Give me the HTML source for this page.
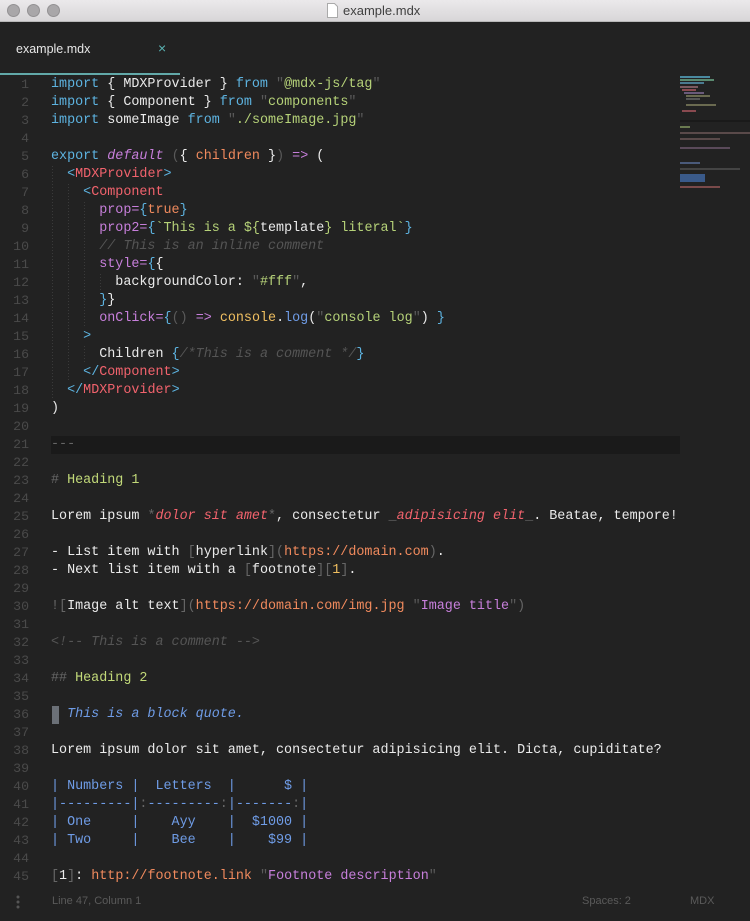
<!DOCTYPE html>
<html><head><meta charset="utf-8">
<style>
*{margin:0;padding:0;box-sizing:border-box}
body{width:750px;height:921px;background:#222;overflow:hidden;position:relative;font-family:"Liberation Mono",monospace}
.title{position:absolute;left:0;top:0;width:750px;height:22px;background:linear-gradient(#ebe9eb,#d8d6d8);border-bottom:1px solid #b8b8b8}
.dot{position:absolute;top:4px;width:13px;height:13px;border-radius:50%;background:#a9a7a9;border:1px solid #939193}
.ttext{position:absolute;top:3px;left:343px;font:13px "Liberation Sans",sans-serif;color:#404040}
.tab{position:absolute;left:16px;top:42px;font:12.5px "Liberation Sans",sans-serif;color:#e6e6e6}
.x{position:absolute;left:158px;top:40px;font:14px "Liberation Sans",sans-serif;color:#5ab3b3}
.uline{position:absolute;left:0;top:73px;width:180px;height:2px;background:#62a9a9}
.hl{position:absolute;left:51px;top:436px;width:629px;height:18px;background:#1a1a1a}
.ln{position:absolute;left:0;width:29px;text-align:right;font-size:13.2px;line-height:18px;color:#4a4a4a}
.c{position:absolute;left:51px;font-size:13.4px;line-height:18px;color:#ebebeb;white-space:pre}
.k{color:#5db3e0}.s{color:#b5d178}.q{color:#5a5a5a}.p{color:#c77fdb}.o{color:#f08a5d}.t{color:#f2636d}.b{color:#5db3e0}
.i{font-style:italic}.cm{color:#555;font-style:italic}.y{color:#f0bf60}.bl{color:#6f9ce6}.g{color:#666}.h{color:#c2d979}
.status{position:absolute;top:895px;font:11px "Liberation Sans",sans-serif;color:#5a5a5a}
.mm{position:absolute;height:2px}
</style></head><body>
<div class="title">
<div class="dot" style="left:7px"></div><div class="dot" style="left:27px"></div><div class="dot" style="left:47px"></div>
<svg style="position:absolute;left:327px;top:3px" width="11" height="15"><path d="M0.5 0.5h7l3 3v11h-10z" fill="#fff" stroke="#aaa"/></svg>
<div class="ttext">example.mdx</div>
</div>
<div class="tab">example.mdx</div><div class="x">×</div>
<div class="uline"></div>
<div class="hl"></div>
<svg style="position:absolute;left:0;top:0" width="750" height="921">
<g stroke="#3a3a3a" stroke-dasharray="1 2">
<line x1="52.5" y1="166" x2="52.5" y2="400"/>
<line x1="68.5" y1="184" x2="68.5" y2="382"/>
<line x1="84.5" y1="202" x2="84.5" y2="328"/>
<line x1="84.5" y1="346" x2="84.5" y2="364"/>
<line x1="100.5" y1="274" x2="100.5" y2="292"/>
</g>
<rect x="52" y="706" width="7" height="18" fill="#6b7077"/>
<circle cx="18" cy="897" r="1.5" fill="#555"/><circle cx="18" cy="902" r="1.5" fill="#555"/><circle cx="18" cy="907" r="1.5" fill="#555"/>
</svg>
<div id="g"></div>
<div class="c" style="top:76px"><span class="k">import</span> { MDXProvider } <span class="k">from</span> <span class="q">"</span><span class="s">@mdx-js/tag</span><span class="q">"</span></div>
<div class="c" style="top:94px"><span class="k">import</span> { Component } <span class="k">from</span> <span class="q">"</span><span class="s">components</span><span class="q">"</span></div>
<div class="c" style="top:112px"><span class="k">import</span> someImage <span class="k">from</span> <span class="q">"</span><span class="s">./someImage.jpg</span><span class="q">"</span></div>
<div class="c" style="top:148px"><span class="k">export</span> <span class="p i">default</span> <span class="q">(</span>{ <span class="o">children</span> }<span class="q">)</span> <span class="p">=&gt;</span> (</div>
<div class="c" style="top:166px">  <span class="b">&lt;</span><span class="t">MDXProvider</span><span class="b">&gt;</span></div>
<div class="c" style="top:184px">    <span class="b">&lt;</span><span class="t">Component</span></div>
<div class="c" style="top:202px">      <span class="p">prop=</span><span class="b">{</span><span class="o">true</span><span class="b">}</span></div>
<div class="c" style="top:220px">      <span class="p">prop2=</span><span class="b">{</span><span class="s">`This is a </span><span class="s">${</span>template<span class="s">}</span><span class="s"> literal`</span><span class="b">}</span></div>
<div class="c" style="top:238px">      <span class="cm">// This is an inline comment</span></div>
<div class="c" style="top:256px">      <span class="p">style=</span><span class="b">{</span>{</div>
<div class="c" style="top:274px">        backgroundColor: <span class="q">"</span><span class="s">#fff</span><span class="q">"</span>,</div>
<div class="c" style="top:292px">      <span class="b">}</span>}</div>
<div class="c" style="top:310px">      <span class="p">onClick=</span><span class="b">{</span><span class="q">()</span> <span class="p">=&gt;</span> <span class="y">console</span>.<span class="bl">log</span>(<span class="q">"</span><span class="s">console log</span><span class="q">"</span>) <span class="b">}</span></div>
<div class="c" style="top:328px">    <span class="b">&gt;</span></div>
<div class="c" style="top:346px">      Children <span class="b">{</span><span class="cm">/*This is a comment */</span><span class="b">}</span></div>
<div class="c" style="top:364px">    <span class="b">&lt;/</span><span class="t">Component</span><span class="b">&gt;</span></div>
<div class="c" style="top:382px">  <span class="b">&lt;/</span><span class="t">MDXProvider</span><span class="b">&gt;</span></div>
<div class="c" style="top:400px">)</div>
<div class="c" style="top:436px"><span class="g">---</span></div>
<div class="c" style="top:472px"><span class="g"># </span><span class="h">Heading 1</span></div>
<div class="c" style="top:508px">Lorem ipsum <span class="g">*</span><span class="t i">dolor sit amet</span><span class="g">*</span>, consectetur <span class="g">_</span><span class="t i">adipisicing elit</span><span class="g">_</span>. Beatae, tempore!</div>
<div class="c" style="top:544px">- List item with <span class="g">[</span>hyperlink<span class="g">](</span><span class="o">https://domain.com</span><span class="g">)</span>.</div>
<div class="c" style="top:562px">- Next list item with a <span class="g">[</span>footnote<span class="g">][</span><span class="y">1</span><span class="g">]</span>.</div>
<div class="c" style="top:598px"><span class="g">![</span>Image alt text<span class="g">](</span><span class="o">https://domain.com/img.jpg</span> <span class="q">"</span><span class="p">Image title</span><span class="q">"</span><span class="g">)</span></div>
<div class="c" style="top:634px"><span class="cm">&lt;!-- This is a comment --&gt;</span></div>
<div class="c" style="top:670px"><span class="g">## </span><span class="h">Heading 2</span></div>
<div class="c" style="top:706px">  <span class="bl i">This is a block quote.</span></div>
<div class="c" style="top:742px">Lorem ipsum dolor sit amet, consectetur adipisicing elit. Dicta, cupiditate?</div>
<div class="c bl" style="top:778px">| Numbers |  Letters  |      $ |</div>
<div class="c bl" style="top:796px">|---------|<span class="g">:</span>---------<span class="g">:</span>|-------<span class="g">:</span>|</div>
<div class="c bl" style="top:814px">| One     |    Ayy    |  $1000 |</div>
<div class="c bl" style="top:832px">| Two     |    Bee    |    $99 |</div>
<div class="c" style="top:868px"><span class="g">[</span>1<span class="g">]</span>: <span class="o">http://footnote.link</span> <span class="q">"</span><span class="p">Footnote description</span><span class="q">"</span></div>
<div class="status" style="left:52px">Line 47, Column 1</div>
<div class="status" style="left:582px">Spaces: 2</div>
<div class="status" style="left:690px">MDX</div>
<div class="mm" style="left:680px;top:76px;width:30px;background:#4a8aa0"></div>
<div class="mm" style="left:680px;top:79px;width:34px;background:#5a8a70"></div>
<div class="mm" style="left:680px;top:82px;width:24px;background:#4a7a90"></div>
<div class="mm" style="left:680px;top:86px;width:18px;background:#7a5a60"></div>
<div class="mm" style="left:682px;top:89px;width:14px;background:#8a4a50"></div>
<div class="mm" style="left:684px;top:92px;width:20px;background:#6a5a7a"></div>
<div class="mm" style="left:686px;top:95px;width:24px;background:#6a6a50"></div>
<div class="mm" style="left:686px;top:98px;width:14px;background:#555"></div>
<div class="mm" style="left:686px;top:104px;width:30px;background:#6a6a50"></div>
<div class="mm" style="left:682px;top:110px;width:14px;background:#8a4a50"></div>
<div class="mm" style="left:680px;top:120px;width:70px;background:#1a1a1a"></div>
<div class="mm" style="left:680px;top:126px;width:10px;background:#6a7a50"></div>
<div class="mm" style="left:680px;top:132px;width:70px;background:#5a4a4a"></div>
<div class="mm" style="left:680px;top:138px;width:40px;background:#5a4a4a"></div>
<div class="mm" style="left:680px;top:147px;width:50px;background:#5a4a5a"></div>
<div class="mm" style="left:680px;top:162px;width:20px;background:#4a5a7a"></div>
<div class="mm" style="left:680px;top:168px;width:60px;background:#444"></div>
<div class="mm" style="left:680px;top:174px;width:25px;height:8px;background:#3a5a8a"></div>
<div class="mm" style="left:680px;top:186px;width:40px;background:#7a4a4a"></div>
<script>
var g=document.getElementById('g'),h='';
for(var n=1;n<=45;n++){h+='<div class="ln" style="top:'+(76+18*(n-1))+'px">'+n+'</div>';}
g.innerHTML=h;
</script>
</body></html>
